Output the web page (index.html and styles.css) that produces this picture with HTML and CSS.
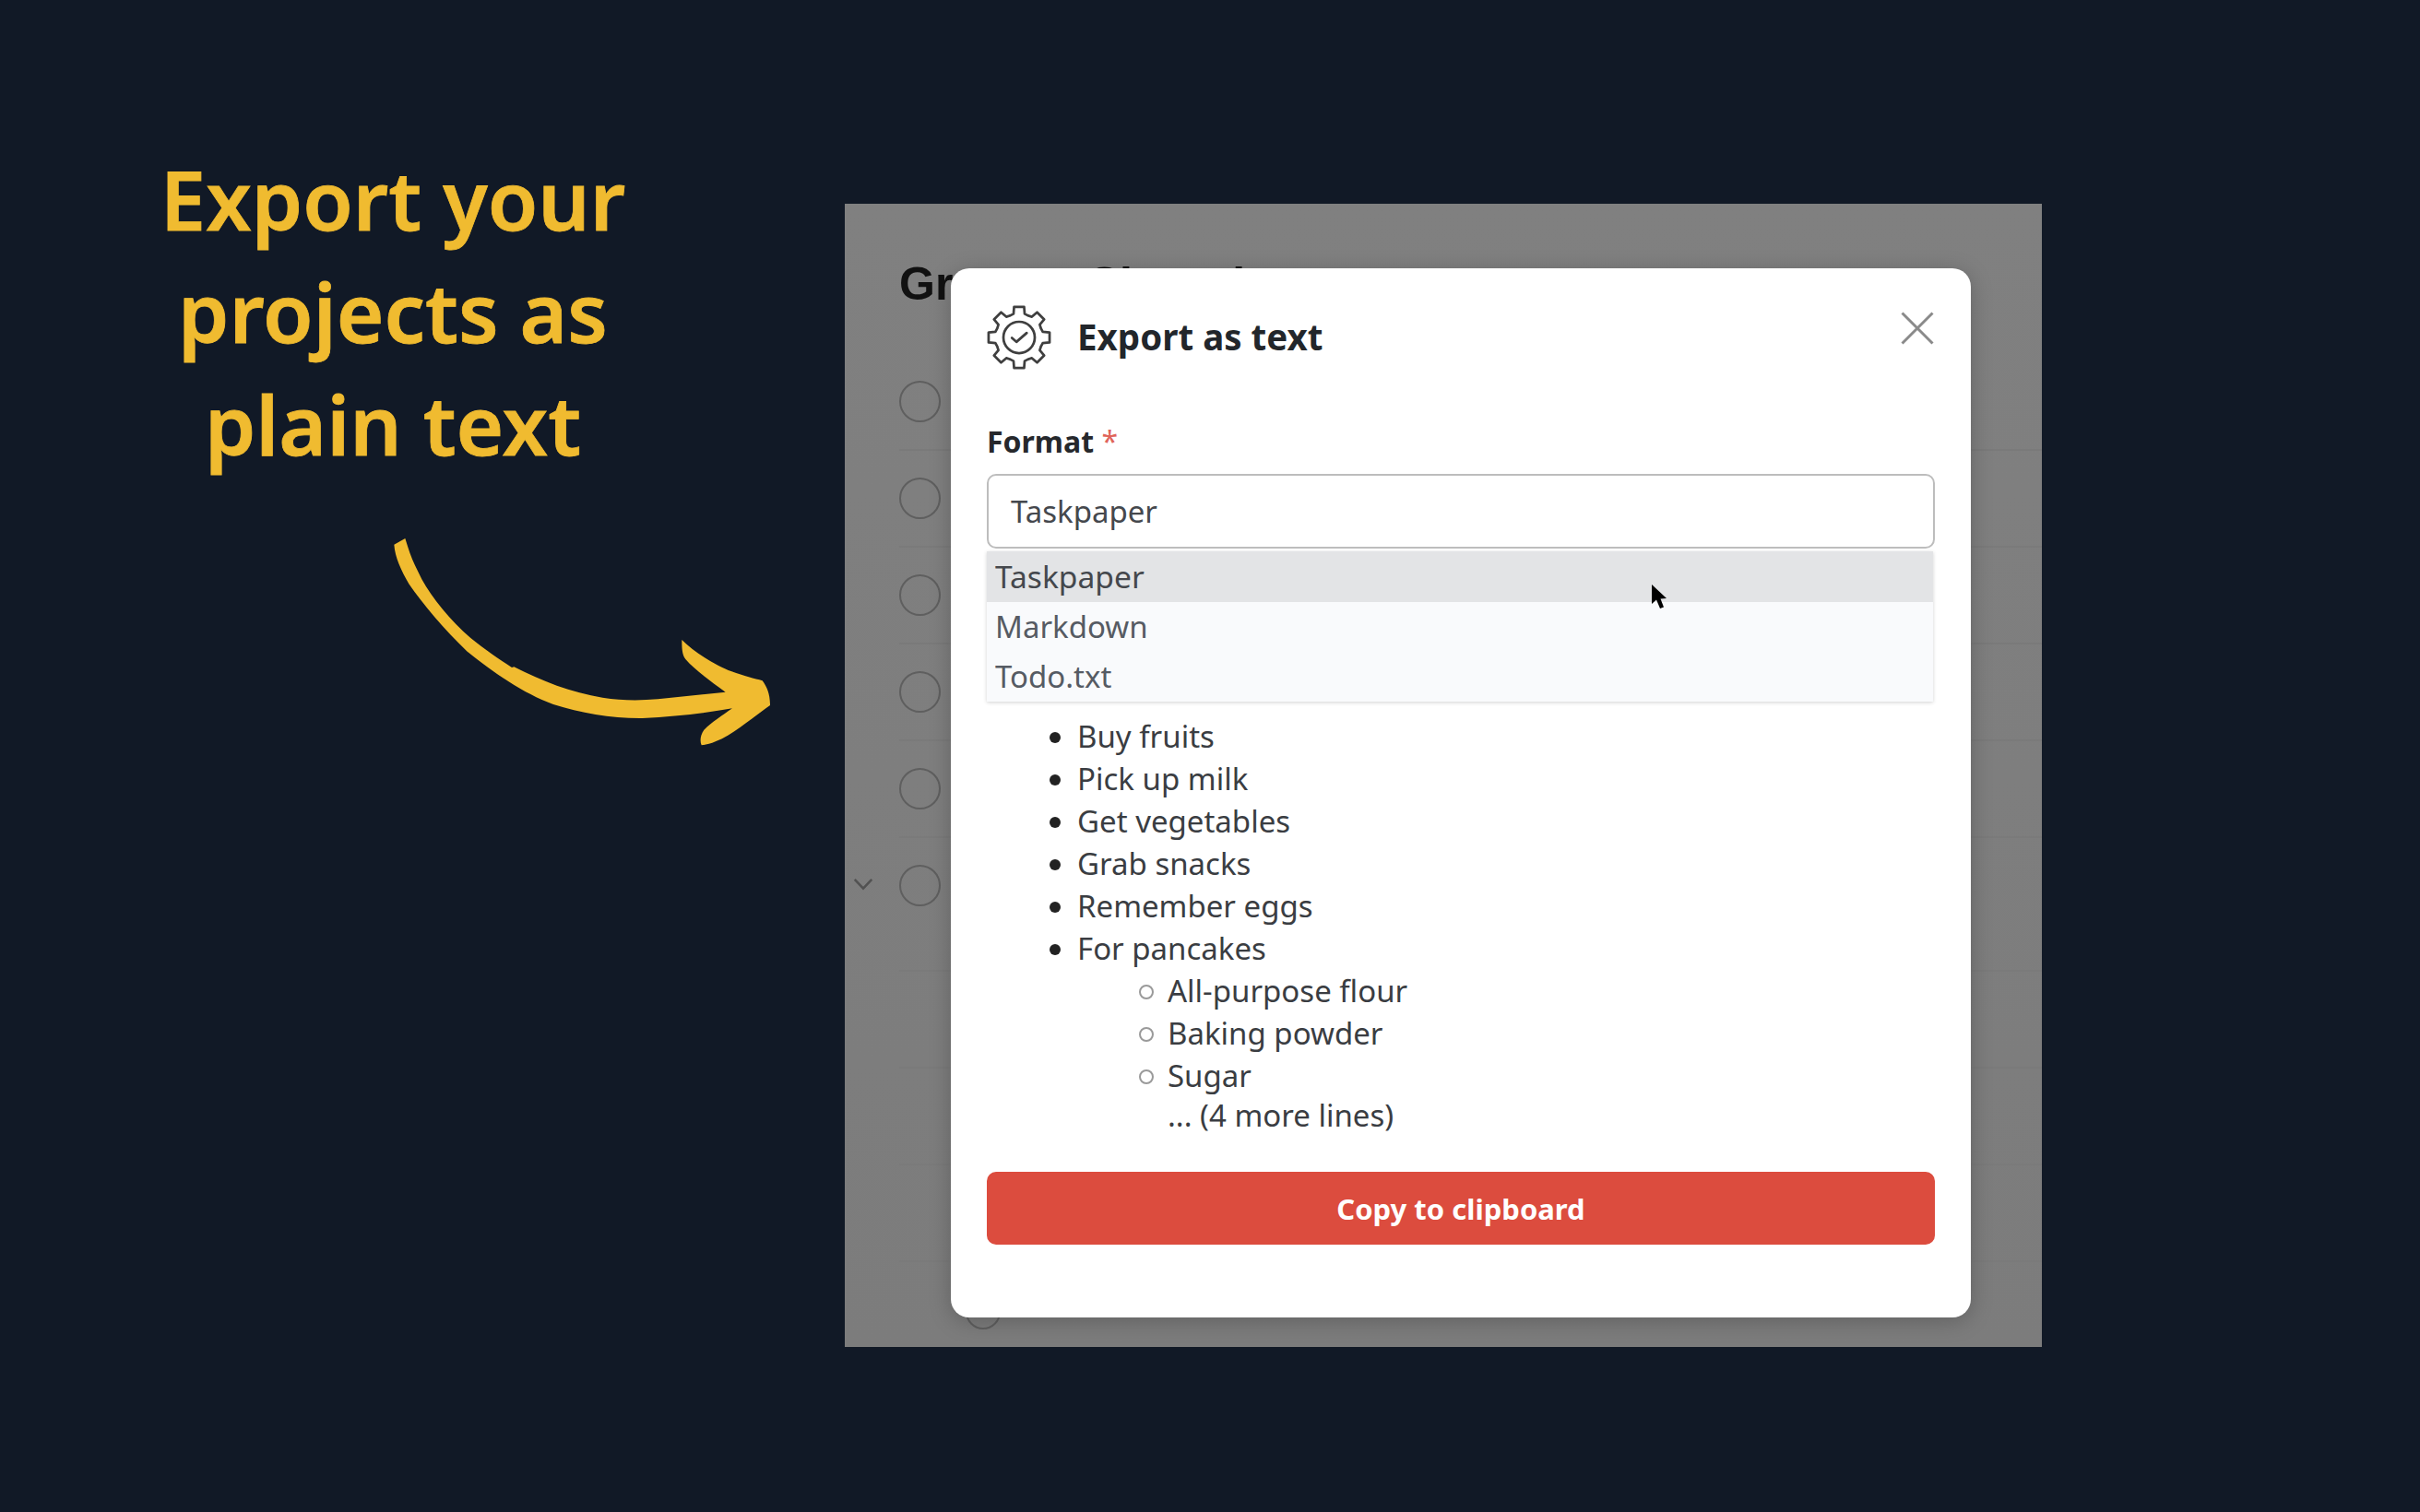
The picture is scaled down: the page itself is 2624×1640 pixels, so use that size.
FILE: index.html
```html
<!DOCTYPE html>
<html lang="en">
<head>
<meta charset="utf-8">
<title>Export as text</title>
<link rel="stylesheet" href="styles.css">
</head>
<body>
<main class="slide">
  <section class="intro">
    <h1 class="headline">Export your<br>projects as<br>plain text</h1>
    <svg class="arrow" viewBox="0 0 1440 810" aria-hidden="true">
      <path d="M82 92 L118 72 C128 105 138 135 150 160 L172 205 C205 265 265 340 330 395 C375 432 425 465 465 492 L472 490 C560 535 660 575 760 590 C820 600 880 600 940 595 L1160 572 C1110 535 1060 500 1030 465 C1018 450 1018 425 1018 402 C1060 445 1130 485 1180 505 C1220 520 1255 528 1280 535 C1295 555 1305 580 1305 615 C1270 640 1220 680 1170 712 C1140 730 1110 742 1082 745 C1076 730 1078 712 1090 695 C1115 670 1150 648 1182 625 C1100 640 1000 652 890 657 C790 658 690 640 600 612 C500 575 400 505 320 440 C245 370 175 285 130 220 C105 175 85 135 82 92 Z"/>
    </svg>
  </section>

  <section class="shot">
    <h2 class="shot-title">Grocery Shopping</h2>
    <div class="task"><span class="check"></span></div>
    <div class="task"><span class="check"></span></div>
    <div class="task"><span class="check"></span></div>
    <div class="task"><span class="check"></span></div>
    <div class="task"><span class="check"></span></div>
    <div class="task task-parent">
      <svg class="chevron" viewBox="0 0 19 12" aria-hidden="true"><path d="M1.5 1.5 L9.5 10 L17.5 1.5"/></svg>
      <span class="check"></span>
    </div>
    <div class="task"><span class="check check-sub"></span></div>
    <div class="task"><span class="check check-sub"></span></div>
    <div class="task"><span class="check check-sub"></span></div>
    <div class="task task-last"><span class="check check-sub"></span></div>

    <div class="modal">
      <header class="modal-head">
        <svg class="gear" viewBox="-36 -36 72 72" aria-hidden="true">
          <g class="gear-teeth">
            <path id="tooth" d="M-9.6 -24.6 L-6.2 -26.4 L-5.6 -34 H5.6 L6.2 -26.4 L9.6 -24.6"/>
            <use href="#tooth" transform="rotate(45)"/>
            <use href="#tooth" transform="rotate(90)"/>
            <use href="#tooth" transform="rotate(135)"/>
            <use href="#tooth" transform="rotate(180)"/>
            <use href="#tooth" transform="rotate(225)"/>
            <use href="#tooth" transform="rotate(270)"/>
            <use href="#tooth" transform="rotate(315)"/>
            <circle r="17.5"/>
            <path d="M-8 0.5 L-3 5 L8.5 -5"/>
          </g>
        </svg>
        <h3 class="modal-title">Export as text</h3>
        <svg class="close" viewBox="0 0 36 36" aria-hidden="true"><path d="M1.5 1.5 L34.5 34.5 M34.5 1.5 L1.5 34.5"/></svg>
      </header>

      <div class="field">
        <label class="field-label">Format <span class="req">*</span></label>
        <div class="select">Taskpaper</div>
        <ul class="menu">
          <li class="menu-item is-active">Taskpaper</li>
          <li class="menu-item">Markdown</li>
          <li class="menu-item">Todo.txt</li>
        </ul>
        <svg class="cursor" viewBox="0 0 19 27" aria-hidden="true"><path d="M1 0 L1 21 L6 16.5 L10 26 L14 24.5 L10.5 15.5 L17 15 Z"/></svg>
      </div>

      <ul class="preview">
        <li>Buy fruits</li>
        <li>Pick up milk</li>
        <li>Get vegetables</li>
        <li>Grab snacks</li>
        <li>Remember eggs</li>
        <li>For pancakes
          <ul class="preview-sub">
            <li>All-purpose flour</li>
            <li>Baking powder</li>
            <li>Sugar</li>
          </ul>
        </li>
      </ul>
      <p class="more">... (4 more lines)</p>

      <button class="copy" type="button">Copy to clipboard</button>
    </div>
  </section>
</main>
</body>
</html>
```
FILE: styles.css
```css
* { box-sizing: border-box; }
html, body { margin: 0; padding: 0; }
body { background: #111926; }

.slide {
  display: flex;
  width: 2624px;
  height: 1640px;
  padding-top: 155px;
  background: #111926;
  font-family: "Noto Sans", sans-serif;
}

.intro { width: 916px; flex: none; }
.headline {
  width: 852px;
  margin: 0;
  text-align: center;
  font-size: 88.5px;
  line-height: 122px;
  font-weight: 600;
  -webkit-text-stroke: 0.8px #f0bb30;
  color: #f0bb30;
}
.arrow {
  display: block;
  width: 480px;
  height: 270px;
  margin: 39px 0 0 400px;
  fill: #f0bb30;
}

.shot {
  position: relative;
  width: 1298px;
  height: 1240px;
  margin-top: 66px;
  padding-left: 59px;
  overflow: hidden;
  background: linear-gradient(#808080, #7c7c7c);
}
.shot-title {
  height: 163px;
  margin: 0;
  padding-top: 58px;
  font-family: "Liberation Sans", sans-serif;
  font-size: 50px;
  line-height: 58px;
  font-weight: 700;
  color: #111;
  white-space: nowrap;
}
.task {
  position: relative;
  height: 105px;
  padding-top: 29px;
  border-bottom: 2px solid #7a7a7a;
}
.task-parent { height: 145px; }
.task-last { border-bottom: 0; padding-top: 35px; }
.check {
  display: block;
  width: 45px;
  height: 45px;
  border: 2.5px solid #5f5f5f;
  border-radius: 50%;
}
.check-sub { width: 38px; height: 38px; margin-left: 72px; }
.chevron {
  position: absolute;
  left: -50px;
  top: 43px;
  width: 22px;
  height: 14px;
  fill: none;
  stroke: #525252;
  stroke-width: 2.2;
}

.modal {
  position: absolute;
  left: 115px;
  top: 70px;
  width: 1106px;
  height: 1138px;
  padding: 40px 39px 0;
  background: #fff;
  border-radius: 20px;
  box-shadow: 0 4px 24px rgba(0, 0, 0, 0.22);
}
.modal-head {
  display: flex;
  align-items: center;
  height: 69px;
}
.gear { width: 70px; height: 70px; flex: none; }
.gear-teeth { fill: none; stroke: #3f3f3f; stroke-width: 2.8; stroke-linejoin: round; stroke-linecap: round; }
.modal-title {
  flex: 1;
  margin: 0 0 0 28px;
  font-size: 38.5px;
  line-height: 69px;
  font-weight: 700;
  color: #22262b;
}
.close {
  width: 36px;
  height: 36px;
  flex: none;
  align-self: flex-start;
  margin: 7px 1px 0 0;
  fill: none;
  stroke: #8a8a8a;
  stroke-width: 3;
}

.field { position: relative; margin-top: 57px; }
.field-label {
  display: block;
  height: 44px;
  font-size: 32px;
  line-height: 44px;
  font-weight: 700;
  color: #26282c;
}
.req { color: #e0645a; font-weight: 400; }
.select {
  height: 81px;
  margin-top: 13px;
  padding-left: 24px;
  border: 2px solid #bdbdbd;
  border-radius: 10px;
  font-size: 33px;
  line-height: 77px;
  color: #45484d;
}
.menu {
  position: absolute;
  left: 0;
  right: 2px;
  top: 141px;
  margin: 0;
  padding: 0;
  list-style: none;
  background: #f9fafc;
  box-shadow: 0 1px 4px rgba(0, 0, 0, 0.18);
}
.menu-item {
  height: 54px;
  padding-left: 9px;
  font-size: 33px;
  line-height: 54px;
  color: #565b63;
}
.menu-item.is-active { height: 55px; background: #e3e4e6; color: #45484d; font-size: 33.6px; }
.cursor {
  position: absolute;
  left: 720px;
  top: 177px;
  width: 19px;
  height: 27px;
  fill: #000;
}

.preview {
  margin: 181px 0 0;
  padding: 0 0 0 98px;
  font-size: 33px;
  line-height: 46px;
  color: #3a3d42;
}
.preview li::marker { color: #222; }
.preview-sub { margin: 0; padding: 0 0 0 98px; list-style: none; }
.preview-sub li { position: relative; }
.preview-sub li::before {
  content: "";
  position: absolute;
  left: -29px;
  top: 16px;
  width: 12px;
  height: 12px;
  margin-left: -2px;
  border: 2px solid #9a9a9a;
  border-radius: 50%;
}
.more {
  margin: -2px 0 0 196px;
  font-size: 33px;
  line-height: 44px;
  color: #3a3d42;
}
.copy {
  display: block;
  width: 1028px;
  height: 79px;
  margin-top: 39px;
  padding: 0;
  border: 0;
  border-radius: 10px;
  background: #dc4c3e;
  color: #fff;
  font-family: inherit;
  font-size: 31px;
  font-weight: 700;
}
```
